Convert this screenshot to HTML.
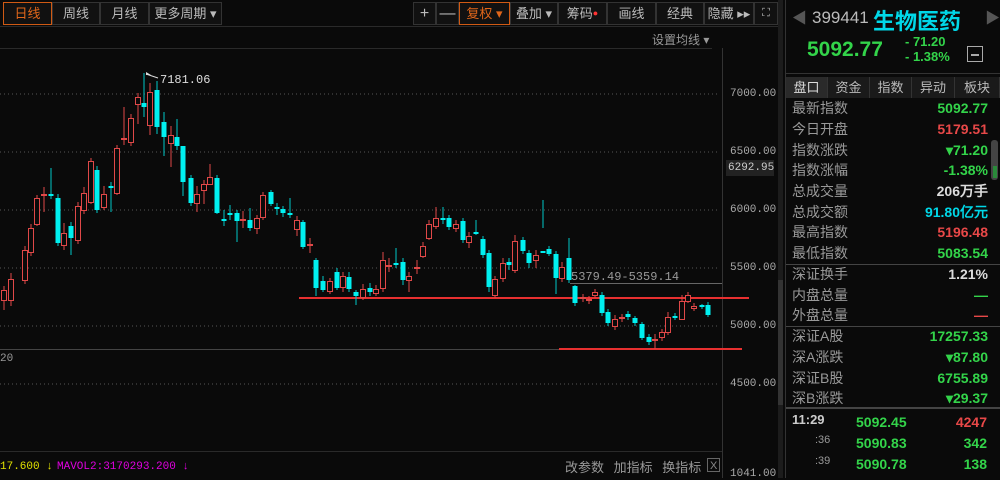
<!DOCTYPE html>
<html><head><meta charset="utf-8"><style>
*{margin:0;padding:0;box-sizing:border-box}
body{width:1000px;height:478px;background:#0a0a0a;overflow:hidden;position:relative;font-family:"Liberation Sans","Noto Sans CJK SC",sans-serif;color:#c8c8c8}
.b{position:absolute;top:2px;height:23px;border:1px solid #333;font-size:13px;color:#bbb;text-align:center;line-height:21px;background:#111}
.o{border:1px solid #d05a14;color:#e0661a}
.a{position:absolute;font-size:11px;color:#aaa;font-family:"Liberation Mono",monospace}
.r{position:absolute;left:792px;width:202px;height:20px;font-size:14px;line-height:20px;color:#999}
.r span{position:absolute;right:6px;font-family:"Liberation Sans",sans-serif;font-weight:bold}
.g{color:#33d44a}.rd{color:#e84848}.c{color:#00d8e8}.w{color:#ddd}
.t{position:absolute;top:77px;height:21px;font-size:13px;line-height:21px;text-align:center;color:#bbb;border-right:1px solid #333;background:#1a1a1a}
</style></head><body>
<div class="b o" style="left:3px;width:49px">日线</div>
<div class="b" style="left:52px;width:48px">周线</div>
<div class="b" style="left:100px;width:49px">月线</div>
<div class="b" style="left:149px;width:73px">更多周期 ▾</div>
<div class="b" style="left:413px;width:23px;font-size:16px">+</div>
<div class="b" style="left:436px;width:23px;font-size:16px">—</div>
<div class="b o" style="left:459px;width:51px">复权 ▾</div>
<div class="b" style="left:510px;width:48px">叠加 ▾</div>
<div class="b" style="left:558px;width:49px">筹码<span style="color:#f33;font-size:9px;vertical-align:top">●</span></div>
<div class="b" style="left:607px;width:49px">画线</div>
<div class="b" style="left:656px;width:48px">经典</div>
<div class="b" style="left:704px;width:50px">隐藏 ▸▸</div>
<div class="b" style="left:754px;width:24px;font-size:11px">⛶</div>
<div style="position:absolute;left:0;top:26px;width:778px;height:1px;background:#2a2a2a"></div>
<div style="position:absolute;left:652px;top:31px;font-size:12px;color:#999">设置均线 ▾</div>
<div style="position:absolute;left:0;top:48px;width:712px;height:1px;background:#2a2a2a"></div>

<svg style="position:absolute;left:0;top:0" width="780" height="478">
<g stroke="#555" stroke-dasharray="1,3">
<line x1="0" y1="94" x2="720" y2="94"/><line x1="0" y1="152" x2="720" y2="152"/><line x1="0" y1="210" x2="720" y2="210"/><line x1="0" y1="268" x2="720" y2="268"/><line x1="0" y1="326" x2="720" y2="326"/><line x1="0" y1="384" x2="720" y2="384"/>
</g>
<line x1="722.5" y1="48" x2="722.5" y2="478" stroke="#333"/>
<line x1="0" y1="349.5" x2="722" y2="349.5" stroke="#444"/>
<line x1="0" y1="451.5" x2="722" y2="451.5" stroke="#2a2a2a"/>
<line x1="570" y1="283.5" x2="722" y2="283.5" stroke="#666"/>
<line x1="299" y1="298" x2="749" y2="298" stroke="#e83030" stroke-width="2"/>
<line x1="559" y1="349" x2="742" y2="349" stroke="#e83030" stroke-width="2"/>
<g id="cy" fill="#00f0f0" stroke="#00c8c8" stroke-width="1">
<path d="M11 290V303M51 168V199M58 194V246M71 222V255M97 166V213M111 182V212M144 73V117M157 81V134M164 112V156M177 119V150M183 146V196M191 175V206M217 175V214M224 210V226M230 205V220M237 210V242M250 208V231M271 190V206M277 203V215M283 206V217M290 198V218M303 220V249M316 258V296M323 276V292M337 268V290M349 272V292M356 290V305M370 283V296M396 248V268M403 258V285M443 207V224M449 215V230M463 218V243M476 220V235M483 236V258M489 250V292M509 258V270M523 237V254M529 250V268M543 200V228M549 246V256M556 251V294M569 238V283M575 285V306M602 292V316M608 309V326M628 311V320M635 316V326M642 322V340M649 334V345M675 313V320M702 304V309M708 302V317"/>
</g>
<g fill="#00f0f0">
<rect x="8.5" y="292" width="5" height="2"/><rect x="48.5" y="194" width="5" height="2"/><rect x="55.5" y="198" width="5" height="45"/><rect x="68.5" y="226" width="5" height="12"/><rect x="94.5" y="170" width="5" height="40"/><rect x="108.5" y="186" width="5" height="2"/><rect x="141.5" y="103" width="5" height="4"/><rect x="154.5" y="90" width="5" height="37"/><rect x="161.5" y="122" width="5" height="15"/><rect x="174.5" y="137" width="5" height="9"/><rect x="180.5" y="146" width="5" height="36"/><rect x="188.5" y="178" width="5" height="25"/><rect x="214.5" y="178" width="5" height="35"/><rect x="221.5" y="219" width="5" height="2"/><rect x="227.5" y="213" width="5" height="2"/><rect x="234.5" y="213" width="5" height="8"/><rect x="247.5" y="220" width="5" height="8"/><rect x="268.5" y="192" width="5" height="12"/><rect x="274.5" y="207" width="5" height="2"/><rect x="280.5" y="209" width="5" height="4"/><rect x="287.5" y="213" width="5" height="2"/><rect x="300.5" y="222" width="5" height="25"/><rect x="313.5" y="260" width="5" height="28"/><rect x="320.5" y="281" width="5" height="9"/><rect x="334.5" y="272" width="5" height="16"/><rect x="346.5" y="277" width="5" height="12"/><rect x="353.5" y="292" width="5" height="4"/><rect x="367.5" y="288" width="5" height="4"/><rect x="393.5" y="263" width="5" height="2"/><rect x="400.5" y="262" width="5" height="18"/><rect x="440.5" y="218" width="5" height="2"/><rect x="446.5" y="218" width="5" height="9"/><rect x="460.5" y="221" width="5" height="19"/><rect x="473.5" y="232" width="5" height="2"/><rect x="480.5" y="239" width="5" height="16"/><rect x="486.5" y="253" width="5" height="34"/><rect x="506.5" y="262" width="5" height="3"/><rect x="520.5" y="240" width="5" height="11"/><rect x="526.5" y="253" width="5" height="10"/><rect x="540.5" y="251" width="5" height="2"/><rect x="546.5" y="249" width="5" height="5"/><rect x="553.5" y="254" width="5" height="24"/><rect x="566.5" y="258" width="5" height="22"/><rect x="572.5" y="286" width="5" height="17"/><rect x="599.5" y="295" width="5" height="18"/><rect x="605.5" y="312" width="5" height="11"/><rect x="625.5" y="314" width="5" height="3"/><rect x="632.5" y="318" width="5" height="5"/><rect x="639.5" y="324" width="5" height="14"/><rect x="646.5" y="337" width="5" height="5"/><rect x="672.5" y="316" width="5" height="2"/><rect x="699.5" y="305" width="5" height="2"/><rect x="705.5" y="305" width="5" height="10"/>
</g>
<g stroke="#e04848" fill="#0a0a0a">
<path d="M4 286V310M11 273V306M25 246V284M31 224V256M37 195V226M44 187V212M64 223V250M78 202V244M84 187V214M91 158V204M104 186V210M117 145V195M124 107V145M131 114V146M138 93V124M150 83V135M171 126V167M197 186V212M204 180V204M210 164V185M243 211V228M257 215V234M263 192V220M297 216V236M310 238V253M330 278V294M343 272V292M363 284V300M376 285V296M383 252V292M389 258V272M409 272V292M417 260V274M423 242V258M429 220V240M436 207V229M456 220V232M469 232V248M495 276V298M503 258V282M515 235V273M536 250V268M562 262V282M583 294V302M589 296V304M595 289V298M615 315V330M622 314V322M655 334V349M662 329V341M668 312V335M682 295V320M688 292V303M694 303V311"/>
<rect x="1.5" y="290.5" width="5" height="10"/><rect x="8.5" y="279.5" width="5" height="21"/><rect x="22.5" y="250.5" width="5" height="30"/><rect x="28.5" y="228.5" width="5" height="24"/><rect x="34.5" y="198.5" width="5" height="26"/><rect x="41.5" y="194.5" width="5" height="1"/><rect x="61.5" y="233.5" width="5" height="12"/><rect x="75.5" y="206.5" width="5" height="34"/><rect x="81.5" y="193.5" width="5" height="17"/><rect x="88.5" y="161.5" width="5" height="41"/><rect x="101.5" y="194.5" width="5" height="13"/><rect x="114.5" y="148.5" width="5" height="45"/><rect x="121.5" y="138.5" width="5" height="1"/><rect x="128.5" y="118.5" width="5" height="24"/><rect x="135.5" y="97.5" width="5" height="7"/><rect x="147.5" y="92.5" width="5" height="33"/><rect x="168.5" y="135.5" width="5" height="8"/><rect x="194.5" y="194.5" width="5" height="9"/><rect x="201.5" y="184.5" width="5" height="6"/><rect x="207.5" y="177.5" width="5" height="7"/><rect x="240.5" y="219.5" width="5" height="1"/><rect x="254.5" y="218.5" width="5" height="10"/><rect x="260.5" y="195.5" width="5" height="22"/><rect x="294.5" y="220.5" width="5" height="9"/><rect x="307.5" y="244.5" width="5" height="1"/><rect x="327.5" y="281.5" width="5" height="10"/><rect x="340.5" y="276.5" width="5" height="11"/><rect x="360.5" y="289.5" width="5" height="8"/><rect x="373.5" y="289.5" width="5" height="4"/><rect x="380.5" y="260.5" width="5" height="28"/><rect x="386.5" y="265.5" width="5" height="1"/><rect x="406.5" y="276.5" width="5" height="4"/><rect x="414.5" y="267.5" width="5" height="1"/><rect x="420.5" y="246.5" width="5" height="10"/><rect x="426.5" y="224.5" width="5" height="14"/><rect x="433.5" y="218.5" width="5" height="8"/><rect x="453.5" y="224.5" width="5" height="4"/><rect x="466.5" y="236.5" width="5" height="6"/><rect x="492.5" y="279.5" width="5" height="16"/><rect x="500.5" y="263.5" width="5" height="15"/><rect x="512.5" y="241.5" width="5" height="29"/><rect x="533.5" y="255.5" width="5" height="5"/><rect x="559.5" y="267.5" width="5" height="11"/><rect x="580.5" y="297.5" width="5" height="1"/><rect x="586.5" y="299.5" width="5" height="1"/><rect x="592.5" y="292.5" width="5" height="3"/><rect x="612.5" y="319.5" width="5" height="7"/><rect x="619.5" y="317.5" width="5" height="1"/><rect x="652.5" y="339.5" width="5" height="1"/><rect x="659.5" y="332.5" width="5" height="5"/><rect x="665.5" y="317.5" width="5" height="15"/><rect x="679.5" y="301.5" width="5" height="18"/><rect x="685.5" y="295.5" width="5" height="6"/><rect x="691.5" y="306.5" width="5" height="2"/>
</g>
<path d="M146 74L158 78" stroke="#ddd"/><path d="M146 72l5 3h-5z" fill="#ddd"/>
<text x="160" y="83" fill="#ddd" font-family="Liberation Mono,monospace" font-size="12">7181.06</text>
<text x="571" y="280" fill="#999" font-family="Liberation Mono,monospace" font-size="12">5379.49-5359.14</text>
<text x="0" y="361" fill="#999" font-family="Liberation Mono,monospace" font-size="11">20</text>
<text x="0" y="469" fill="#e0e000" font-family="Liberation Mono,monospace" font-size="11">17.600 ↓</text>
<text x="57" y="469" fill="#e000e0" font-family="Liberation Mono,monospace" font-size="11">MAVOL2:3170293.200 ↓</text>
<rect x="707.5" y="458.5" width="12" height="13" fill="none" stroke="#666"/>
<text x="710" y="469" fill="#888" font-size="11">X</text>
</svg>
<div style="position:absolute;left:565px;top:457px;font-size:13px;color:#999;word-spacing:6px">改参数 加指标 换指标</div>
<div class="a" style="left:730px;top:88px">7000.00</div>
<div class="a" style="left:730px;top:146px">6500.00</div>
<div class="a" style="left:726px;top:160px;width:48px;height:16px;background:#222;color:#ccc;padding:2px 0 0 2px">6292.95</div>
<div class="a" style="left:730px;top:204px">6000.00</div>
<div class="a" style="left:730px;top:262px">5500.00</div>
<div class="a" style="left:730px;top:320px">5000.00</div>
<div class="a" style="left:730px;top:378px">4500.00</div>
<div class="a" style="left:730px;top:468px">1041.00</div>

<div style="position:absolute;left:778px;top:0;width:5px;height:478px;background:#1c1c1c"></div>
<div style="position:absolute;left:778px;top:280px;width:5px;height:125px;background:#333"></div>
<div style="position:absolute;left:785px;top:0;width:1px;height:478px;background:#333"></div>
<div style="position:absolute;left:792px;top:7px;font-size:15px;color:#555">◀</div>
<div style="position:absolute;left:812px;top:8px;font-size:17px;color:#bbb">399441</div>
<div style="position:absolute;left:873px;top:4px;font-size:22px;color:#00d8e8;font-weight:bold">生物医药</div>
<div style="position:absolute;left:985px;top:7px;font-size:15px;color:#555">▶</div>
<div style="position:absolute;left:807px;top:38px;font-size:21px;color:#33d44a;font-weight:bold">5092.77</div>
<div style="position:absolute;left:905px;top:34px;font-size:13px;color:#33d44a;font-weight:bold;line-height:15px">- 71.20<br>- 1.38%</div>
<div style="position:absolute;left:967px;top:46px;width:16px;height:16px;border:1px solid #aaa"><div style="margin:7px 3px;height:2px;background:#aaa"></div></div>
<div style="position:absolute;left:786px;top:73px;width:214px;height:1px;background:#333"></div>
<div class="t" style="left:786px;width:42px;background:#2a2a2a;color:#ddd">盘口</div>
<div class="t" style="left:828px;width:42px">资金</div>
<div class="t" style="left:870px;width:42px">指数</div>
<div class="t" style="left:912px;width:43px">异动</div>
<div class="t" style="left:955px;width:45px">板块</div>
<div class="r" style="top:98px">最新指数<span class="g">5092.77</span></div>
<div class="r" style="top:119px">今日开盘<span class="rd">5179.51</span></div>
<div class="r" style="top:140px">指数涨跌<span class="g">▾71.20</span></div>
<div class="r" style="top:160px">指数涨幅<span class="g">-1.38%</span></div>
<div class="r" style="top:181px">总成交量<span class="w">206万手</span></div>
<div class="r" style="top:202px">总成交额<span class="c">91.80亿元</span></div>
<div class="r" style="top:222px">最高指数<span class="rd">5196.48</span></div>
<div class="r" style="top:243px">最低指数<span class="g">5083.54</span></div>
<div style="position:absolute;left:786px;top:264px;width:214px;height:1px;background:#444"></div>
<div class="r" style="top:264px">深证换手<span class="w">1.21%</span></div>
<div class="r" style="top:285px">内盘总量<span class="g">—</span></div>
<div class="r" style="top:305px">外盘总量<span class="rd">—</span></div>
<div style="position:absolute;left:786px;top:326px;width:214px;height:1px;background:#444"></div>
<div class="r" style="top:326px">深证A股<span class="g">17257.33</span></div>
<div class="r" style="top:347px">深A涨跌<span class="g">▾87.80</span></div>
<div class="r" style="top:368px">深证B股<span class="g">6755.89</span></div>
<div class="r" style="top:388px">深B涨跌<span class="g">▾29.37</span></div>
<div style="position:absolute;left:786px;top:407px;width:214px;height:2px;background:#444"></div>
<div style="position:absolute;left:792px;top:412px;font-size:13px;font-weight:bold;color:#ccc">11:29</div>
<div style="position:absolute;left:815px;top:434px;font-size:11px;color:#999">:36</div>
<div style="position:absolute;left:815px;top:455px;font-size:11px;color:#999">:39</div>
<div style="position:absolute;left:856px;top:412px;font-size:14px;font-weight:bold;color:#33d44a;line-height:21px">5092.45<br>5090.83<br>5090.78</div>
<div style="position:absolute;right:13px;top:412px;font-size:14px;font-weight:bold;color:#33d44a;line-height:21px;text-align:right"><span class="rd">4247</span><br>342<br>138</div>
<div style="position:absolute;left:991px;top:140px;width:7px;height:40px;background:#444;border-radius:3px"></div>
<div style="position:absolute;left:993px;top:166px;width:4px;height:12px;background:#2a8a3a"></div>
</body></html>
